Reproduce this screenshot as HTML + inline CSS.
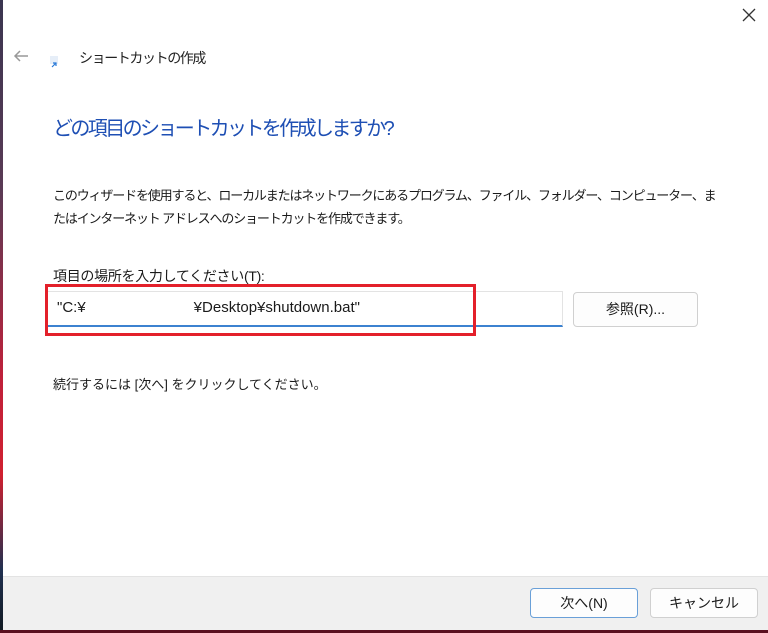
<!DOCTYPE html>
<html><head><meta charset="utf-8"><style>
*{margin:0;padding:0;box-sizing:border-box}
body{width:768px;height:633px;overflow:hidden;background:#fff;font-family:"Liberation Sans","Noto Sans CJK JP",sans-serif;color:#1a1a1a;position:relative}
.edge{position:absolute;left:0;top:0;width:3px;height:633px;background:linear-gradient(#3a3550,#5a3a55 30%,#c0203a 60%,#d02030 75%,#203050 90%,#101820)}
.bottom{position:absolute;left:0;top:630px;width:768px;height:3px;background:#5a1020}
.t{position:absolute;white-space:nowrap}
.footer{position:absolute;left:3px;top:576px;width:765px;height:54px;background:#f0f0f0;border-top:1px solid #e3e3e3}
.btn{position:absolute;background:#fdfdfd;border:1px solid #d0d0d0;border-radius:4px;font-size:14px;text-align:center}
</style></head><body>
<div class="edge"></div>
<svg class="t" style="left:742px;top:8px" width="14" height="14"><path d="M1 1L13 13M13 1L1 13" stroke="#333" stroke-width="1.3"/></svg>
<svg class="t" style="left:12px;top:48px" width="18" height="16"><path d="M16 8H3M8 3L3 8L8 13" stroke="#999" stroke-width="1.5" fill="none"/></svg>
<div class="t" style="left:50px;top:56px;width:8px;height:8px;background:#e6eef8"><svg width="8" height="8"><path d="M2 6L6 2M3 2H6V5" stroke="#2a7ad8" stroke-width="1.2" fill="none"/></svg></div>
<div class="t" style="left:79px;top:48px;font-size:14px;color:#222;letter-spacing:-1.4px">ショートカットの作成</div>
<div class="t" style="left:53px;top:112px;font-size:20px;color:#1e4fb4;letter-spacing:-2.6px">どの項目のショートカットを作成しますか?</div>
<div class="t" style="left:53px;top:184px;font-size:13px;line-height:23px;letter-spacing:-1.15px">このウィザードを使用すると、ローカルまたはネットワークにあるプログラム、ファイル、フォルダー、コンピューター、ま<br>たはインターネット アドレスへのショートカットを作成できます。</div>
<div class="t" style="left:53px;top:266px;font-size:14px;letter-spacing:-0.3px">項目の場所を入力してください(T):</div>
<div class="t" style="left:47px;top:291px;width:516px;height:36px;border:1px solid #e3e3e3;border-bottom:2px solid #3c82d0;background:#fff"></div>
<div class="t" style="left:57px;top:299px;font-size:15px">"C:¥<span style="display:inline-block;width:108px"></span>¥Desktop¥shutdown.bat"</div>
<div class="t" style="left:45px;top:284px;width:431px;height:52px;border:3px solid #e3202a"></div>
<div class="btn" style="left:573px;top:292px;width:125px;height:35px;line-height:33px">参照(R)...</div>
<div class="t" style="left:53px;top:374px;font-size:13px">続行するには [次へ] をクリックしてください。</div>
<div class="footer"></div>
<div class="btn" style="left:530px;top:588px;width:108px;height:30px;line-height:28px;border-color:#6aa0d8">次へ(N)</div>
<div class="btn" style="left:650px;top:588px;width:108px;height:30px;line-height:28px">キャンセル</div>
<div class="bottom"></div>
</body></html>
